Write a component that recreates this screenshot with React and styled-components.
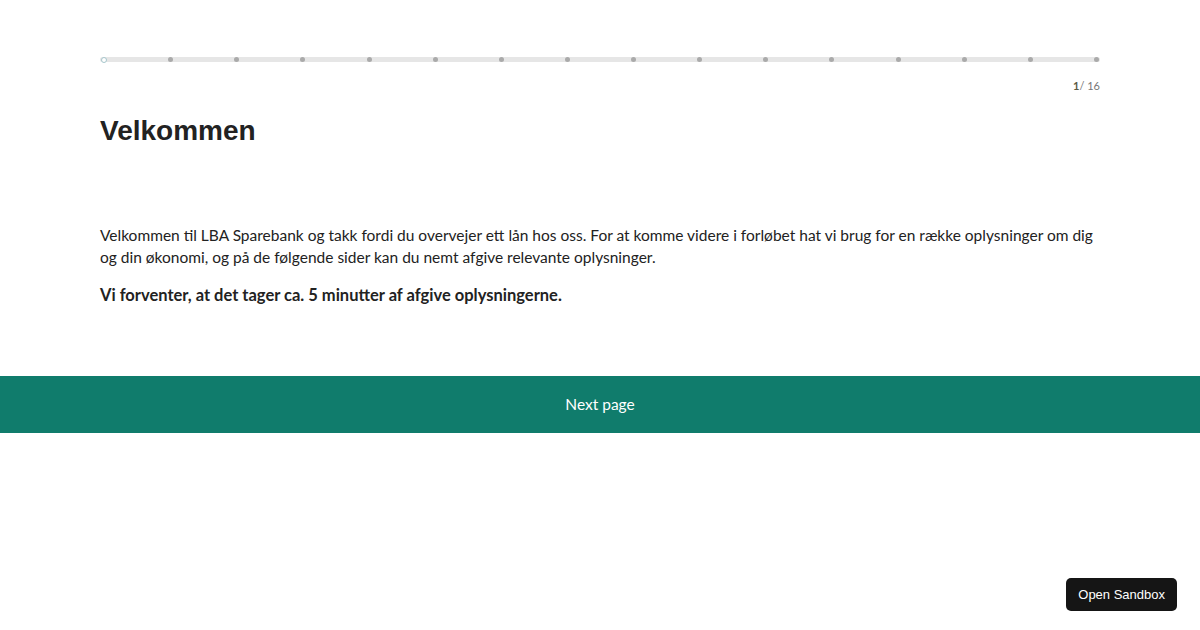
import React from 'react';
import styled, { createGlobalStyle } from 'styled-components';

const GlobalStyle = createGlobalStyle`
  body {
    margin: 0;
    background: #fff;
    font-family: Lato, "Open Sans", sans-serif;
    color: #222;
  }
`;

const Page = styled.div`
  width: 1000px;
  margin: 0 auto;
  padding-top: 57px;
`;

const Track = styled.div`
  height: 5px;
  background: #e6e6e6;
  border-radius: 3px;
  display: flex;
  justify-content: space-between;
  align-items: center;
  padding: 0 1px;
`;

const Dot = styled.span`
  width: ${({ current }) => (current ? '4px' : '5px')};
  height: ${({ current }) => (current ? '4px' : '5px')};
  border-radius: 50%;
  box-sizing: content-box;
  background: ${({ current }) => (current ? '#fff' : '#aaa')};
  border: ${({ current }) => (current ? '1px solid #a6c6cc' : 'none')};
`;

const Counter = styled.div`
  margin-top: 17px;
  text-align: right;
  font-size: 11px;
  line-height: 14px;
  color: #777;

  b {
    color: #5c5a44;
    font-weight: 700;
  }
`;

const Heading = styled.h1`
  margin: 22px 0 0;
  font-family: "Liberation Sans", Arial, sans-serif;
  font-size: 28px;
  line-height: 32px;
  font-weight: 700;
  color: #222;
`;

const Body = styled.div`
  margin-top: 77px;
`;

const Text = styled.p`
  margin: 0 0 16px;
  font-size: ${({ strong }) => (strong ? '16.5px' : '15.5px')};
  line-height: 22px;
  font-weight: ${({ strong }) => (strong ? 700 : 400)};

  &:last-child {
    margin-bottom: 0;
  }
`;

const NextBar = styled.button`
  display: flex;
  align-items: center;
  justify-content: center;
  width: 100%;
  height: 57px;
  margin-top: 70px;
  border: 0;
  padding: 0 0 2px;
  background: #107c6c;
  color: #fff;
  font-family: Lato, "Open Sans", sans-serif;
  font-size: 15.5px;
  cursor: pointer;
`;

const SandboxButton = styled.button`
  position: fixed;
  right: 23px;
  bottom: 19px;
  height: 33px;
  padding: 0 12px;
  border: 0;
  border-radius: 5px;
  background: #151515;
  color: #fff;
  font-family: "Liberation Sans", Arial, sans-serif;
  font-size: 13px;
  cursor: pointer;
`;

const TOTAL = 16;

export default function App() {
  return (
    <>
      <GlobalStyle />
      <Page>
        <Track>
          {Array.from({ length: TOTAL }).map((_, i) => (
            <Dot key={i} current={i === 0} />
          ))}
        </Track>
        <Counter>
          <b>1</b>/ {TOTAL}
        </Counter>
        <Heading>Velkommen</Heading>
        <Body>
          <Text>
            Velkommen til LBA Sparebank og takk fordi du overvejer ett lån hos oss. For at komme videre i forløbet hat vi brug for en række oplysninger om dig og din økonomi, og på de følgende sider kan du nemt afgive relevante oplysninger.
          </Text>
          <Text strong>Vi forventer, at det tager ca. 5 minutter af afgive oplysningerne.</Text>
        </Body>
      </Page>
      <NextBar>Next page</NextBar>
      <SandboxButton>Open Sandbox</SandboxButton>
    </>
  );
}
